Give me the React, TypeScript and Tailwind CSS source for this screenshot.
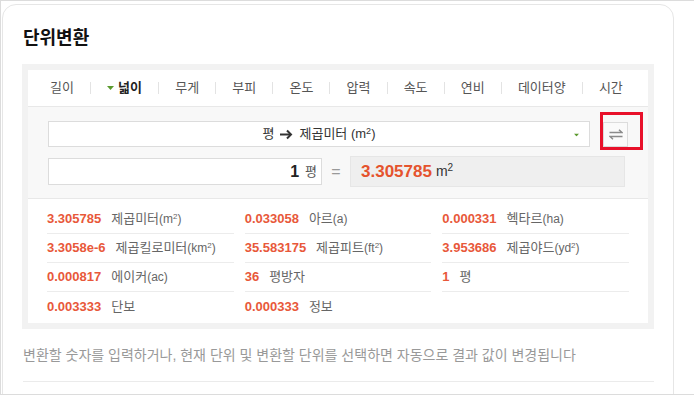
import React from "react";

const FONT = { fontFamily: '"Liberation Sans", "Noto Sans CJK KR", sans-serif' };

const tabs = ["길이", "넓이", "무게", "부피", "온도", "압력", "속도", "연비", "데이터양", "시간"];

type Item = { n: string; k: string; u?: string; sup?: boolean };
const items: Item[] = [
  { n: "3.305785", k: "제곱미터", u: "m", sup: true },
  { n: "0.033058", k: "아르", u: "a" },
  { n: "0.000331", k: "헥타르", u: "ha" },
  { n: "3.3058e-6", k: "제곱킬로미터", u: "km", sup: true },
  { n: "35.583175", k: "제곱피트", u: "ft", sup: true },
  { n: "3.953686", k: "제곱야드", u: "yd", sup: true },
  { n: "0.000817", k: "에이커", u: "ac" },
  { n: "36", k: "평방자" },
  { n: "1", k: "평" },
  { n: "0.003333", k: "단보" },
  { n: "0.000333", k: "정보" },
];

function Tri({ className }: { className?: string }) {
  return (
    <svg width="7" height="4" viewBox="0 0 7 4" className={className}>
      <path d="M0 0 H7 L3.5 4 Z" fill="#5b9a2e" />
    </svg>
  );
}

export default function App() {
  return (
    <div
      className="w-[694px] h-[395px] overflow-hidden bg-white border-t border-l border-b border-[#dcdcdc] pl-[1px] pt-[3px]"
      style={FONT}
    >
      <div className="w-[672px] h-[400px] rounded-t-[14px] border border-[#e6e6e6] px-[19px] pt-[21px]">
        <div className="pl-[1px] text-[18px] leading-[24px] font-bold text-[#111]">단위변환</div>

        <div className="mt-[14px] w-[632px] bg-[#f2f2f2] p-[6px]">
          {/* tabs */}
          <div className="h-[37px] bg-white border-b border-[#e8e8e8] flex items-center justify-between pl-[22px] pr-[25px] text-[13px] text-[#555]">
            {tabs.map((t, i) => (
              <React.Fragment key={t}>
                {i > 0 && <span className="w-px h-[12px] bg-[#e3e3e3]" />}
                {t === "넓이" ? (
                  <span className="flex items-center gap-[4px] font-bold text-[#222]">
                    <Tri className="mb-[1px]" />
                    {t}
                  </span>
                ) : (
                  <span>{t}</span>
                )}
              </React.Fragment>
            ))}
          </div>

          {/* converter */}
          <div className="relative bg-[#f8f8f8] border-b border-[#e8e8e8] px-[20px] pt-[14px] pb-[11px]">
            <div className="flex items-center gap-[13px]">
              <div className="relative flex-1 h-[26px] bg-white border border-[#dcdcdc] flex items-center justify-center text-[13px] text-[#333]">
                <span className="flex items-center gap-[6px]">
                  <span>평</span>
                  <svg width="13" height="11" viewBox="0 0 13 11" fill="none" stroke="#333" strokeWidth="2">
                    <path d="M0 5.5 H11" />
                    <path d="M7 1.5 L11 5.5 L7 9.5" />
                  </svg>
                  <span>
                    제곱미터 (m<sup className="text-[9px]">2</sup>)
                  </span>
                </span>
                <Tri className="absolute right-[9px] top-[11px] scale-75" />
              </div>
              <div className="w-[25px] h-[25px] bg-[#fafafa] border border-[#dcdcdc] flex items-center justify-center">
                <svg width="14" height="11" viewBox="0 0 14 11" fill="none" stroke="#8a8a8a" strokeWidth="1.5">
                  <path d="M0.5 3.5 H13 L10 0.8" />
                  <path d="M13.5 7.5 H1 L4 10.2" />
                </svg>
              </div>
            </div>

            <div className="mt-[9px] flex items-center">
              <div className="w-[274px] h-[27px] bg-white border border-[#dcdcdc] flex items-center justify-end pr-[4px] gap-[6px]">
                <span className="text-[16px] font-bold text-[#222]">1</span>
                <span className="text-[13px] text-[#555]">평</span>
              </div>
              <span className="w-[28px] text-center text-[16px] text-[#999]">=</span>
              <div className="w-[275px] h-[31px] bg-[#efefef] border border-[#e6e6e6] flex items-center pl-[10px] gap-[4px]">
                <span className="text-[17px] font-bold text-[#e5532d]">3.305785</span>
                <span className="text-[14px] text-[#333]">
                  m<sup className="text-[10px]">2</sup>
                </span>
              </div>
            </div>

            <div className="absolute left-[572px] top-[5px] w-[43px] h-[38px] border-[3px] border-[#e8102a]" />
          </div>

          {/* results */}
          <div className="bg-white pl-[19px] pr-[19px] pt-[6px] pb-[2px]">
            <div className="grid grid-cols-3 gap-x-[11px]">
              {items.map((it, i) => (
                <div
                  key={i}
                  className={
                    "h-[29px] flex items-center gap-[10px] text-[13px] " +
                    (i < 9 ? "border-b border-[#ececec]" : "")
                  }
                >
                  <span className="font-bold text-[#e8583a]">{it.n}</span>
                  <span className="text-[#666]">
                    {it.k}
                    {it.u && (
                      <span className="text-[12px]">
                        ({it.u}
                        {it.sup && <sup className="text-[8px]">2</sup>})
                      </span>
                    )}
                  </span>
                </div>
              ))}
            </div>
          </div>
        </div>

        <div className="mt-[16px] pl-[1px] text-[14px] leading-[20px] text-[#999]">
          변환할 숫자를 입력하거나, 현재 단위 및 변환할 단위를 선택하면 자동으로 결과 값이 변경됩니다
        </div>
        <div className="mt-[16px] ml-[1px] w-[631px] border-t border-[#ebebeb]" />
      </div>
    </div>
  );
}
